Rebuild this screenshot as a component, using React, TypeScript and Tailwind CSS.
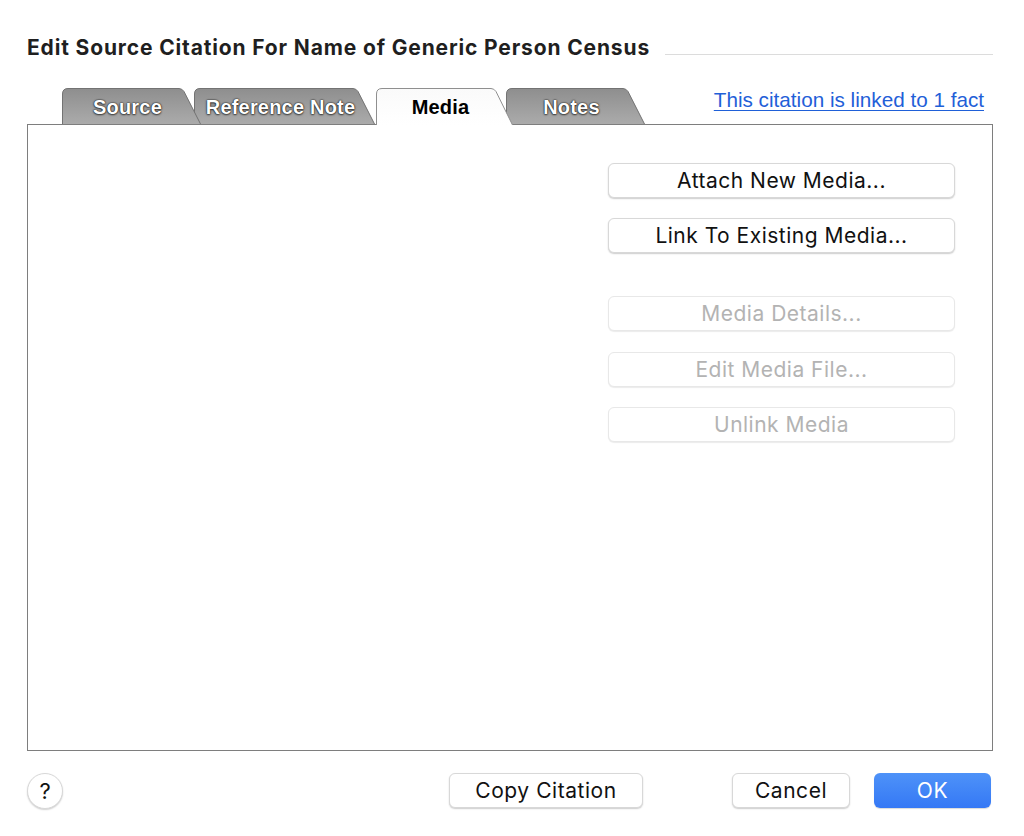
import React from "react";

type TabProps = {
  label: string;
  width: number;
  active?: boolean;
  gid: string;
  className: string;
};

function Tab({ label, width, active, gid, className }: TabProps) {
  const H = active ? 37 : 36;
  const s = 18;
  const W = width;
  const edge = `M0.5 ${H} V6 Q0.5 0.5 6 0.5 H${W - s - 4} Q${W - s - 1} 0.5 ${W - s + 1} 3.5 L${W - 0.5} ${H}`;
  const fill = `${edge} Z`;
  return (
    <div className={`relative h-[36px] shrink-0 ${className}`}>
      <svg
        className="absolute left-0 top-0 overflow-visible"
        width={W}
        height={H}
        viewBox={`0 0 ${W} ${H}`}
      >
        <defs>
          <linearGradient id={gid} x1="0" y1="0" x2="0" y2="1">
            {active ? (
              <>
                <stop offset="0" stopColor="#fafafa" />
                <stop offset="1" stopColor="#ffffff" />
              </>
            ) : (
              <>
                <stop offset="0" stopColor="#8e8e8e" />
                <stop offset="1" stopColor="#ababab" />
              </>
            )}
          </linearGradient>
        </defs>
        <path d={fill} fill={`url(#${gid})`} />
        <path d={edge} fill="none" stroke={active ? "#8f8f8f" : "#737373"} strokeWidth="1" />
      </svg>
      <div className="relative flex h-[36px] items-center justify-center pr-[8px] pt-[2px]">
        <span
          className={
            active
              ? "text-[20px] font-bold leading-[24px] tracking-[0.2px] text-black font-['Liberation_Sans',Arial,sans-serif]"
              : "text-[20px] font-bold leading-[24px] tracking-[0.2px] text-white font-['Liberation_Sans',Arial,sans-serif] [text-shadow:0_0_1px_rgba(0,0,0,0.9),0_0_2px_rgba(0,0,0,0.7),0_1px_2px_rgba(0,0,0,0.5)]"
          }
        >
          {label}
        </span>
      </div>
    </div>
  );
}

function PanelButton({ label, disabled }: { label: string; disabled?: boolean }) {
  return (
    <button
      type="button"
      className={
        disabled
          ? "flex h-[35px] w-full items-center justify-center rounded-[6px] border border-[#e8e8e8] bg-white pt-[1px] text-[21px] tracking-[0.5px] text-[#b3b3b3] shadow-[0_1px_1px_rgba(0,0,0,0.08)] font-['Inter','Liberation_Sans',sans-serif]"
          : "flex h-[35px] w-full items-center justify-center rounded-[6px] border border-[#d8d8d8] bg-white pt-[1px] text-[21px] tracking-[0.5px] text-[#111111] shadow-[0_1px_1.5px_rgba(0,0,0,0.2)] font-['Inter','Liberation_Sans',sans-serif]"
      }
    >
      {label}
    </button>
  );
}

export default function App() {
  return (
    <div className="h-[836px] w-[1024px] overflow-hidden bg-white pl-[27px] pr-[31px] pt-[36px] text-[#1d1d1d] font-['Liberation_Sans',Arial,sans-serif]">
      {/* Title row */}
      <div className="flex h-[24px] items-start">
        <h1 className="whitespace-nowrap text-[21px] font-bold leading-[24px] tracking-[0.85px] text-[#1f1f1f] font-['Inter','Liberation_Sans',sans-serif]">
          Edit Source Citation For Name of Generic Person Census
        </h1>
        <div className="ml-[15px] mt-[18px] h-px flex-1 bg-[#dcdcdc]" />
      </div>

      {/* Tabs row */}
      <div className="relative z-10 mt-[28px] flex h-[36px] items-start pl-[35px] pr-[9px]">
        <Tab label="Source" width={139} gid="tab-g-source" className="z-[4] w-[139px]" />
        <Tab label="Reference Note" width={181} gid="tab-g-ref" className="z-[3] -ml-[7px] w-[181px]" />
        <Tab label="Media" width={137} active gid="tab-g-media" className="z-[5] ml-[1px] w-[137px]" />
        <Tab label="Notes" width={139} gid="tab-g-notes" className="z-[2] -ml-[7px] w-[139px]" />
        <a
          href="#"
          className="ml-auto whitespace-nowrap text-[20.7px] leading-[24px] text-[#1f60d8] underline decoration-1 underline-offset-[3px]"
        >
          This citation is linked to 1 fact
        </a>
      </div>

      {/* Panel */}
      <div className="flex h-[627px] justify-end border border-[#7e7e7e] pr-[37px] pt-[38px]">
        <div className="flex w-[347px] flex-col">
          <PanelButton label="Attach New Media..." />
          <div className="h-[20px]" />
          <PanelButton label="Link To Existing Media..." />
          <div className="h-[43px]" />
          <PanelButton label="Media Details..." disabled />
          <div className="h-[21px]" />
          <PanelButton label="Edit Media File..." disabled />
          <div className="h-[20px]" />
          <PanelButton label="Unlink Media" disabled />
        </div>
      </div>

      {/* Bottom row */}
      <div className="mt-[21px] flex h-[37px] items-center">
        <button
          type="button"
          className="flex h-[36px] w-[36px] items-center justify-center rounded-full border border-[#d8d8d8] bg-white text-[22px] leading-none text-[#111111] shadow-[0_1px_1.5px_rgba(0,0,0,0.18)] font-['Inter','Liberation_Sans',sans-serif]"
        >
          ?
        </button>
        <div className="flex-1" />
        <button
          type="button"
          className="flex h-[35px] w-[194px] items-center justify-center rounded-[6px] border border-[#d8d8d8] bg-white pt-[1px] text-[21px] tracking-[0.55px] text-[#111111] shadow-[0_1px_1.5px_rgba(0,0,0,0.2)] font-['Inter','Liberation_Sans',sans-serif]"
        >
          Copy Citation
        </button>
        <button
          type="button"
          className="ml-[89px] flex h-[35px] w-[118px] items-center justify-center rounded-[6px] border border-[#d8d8d8] bg-white pt-[1px] text-[21px] tracking-[0.55px] text-[#111111] shadow-[0_1px_1.5px_rgba(0,0,0,0.2)] font-['Inter','Liberation_Sans',sans-serif]"
        >
          Cancel
        </button>
        <button
          type="button"
          className="ml-[24px] mr-[2px] flex h-[35px] w-[117px] items-center justify-center rounded-[6px] bg-linear-to-b from-[#4e92f8] to-[#3578f5] pt-[1px] text-[21px] tracking-[0.55px] text-white shadow-[0_1px_1px_rgba(0,0,0,0.15)] font-['Inter','Liberation_Sans',sans-serif]"
        >
          OK
        </button>
      </div>
    </div>
  );
}
